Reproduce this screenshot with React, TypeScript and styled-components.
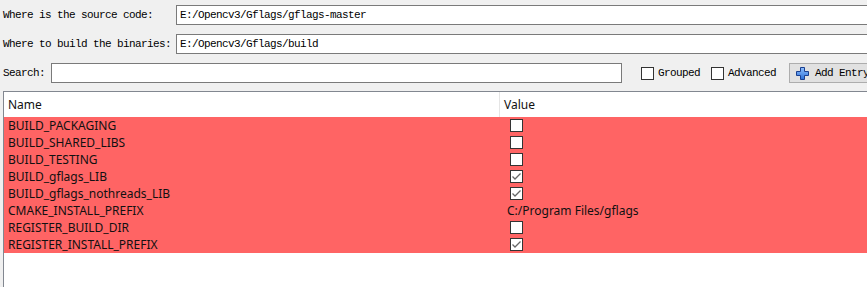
import styled, { createGlobalStyle } from "styled-components";

const GlobalStyle = createGlobalStyle`
    html, body {
        margin: 0;
        padding: 0;
        background: #f0f0f0;
        overflow: hidden;
    }
`;

const Window = styled.div`
    width: 920px;
    height: 287px;
    display: flex;
    flex-direction: column;
    background: #f0f0f0;
    font-family: "Liberation Mono", "DejaVu Sans Mono", monospace;
    font-size: 11px;
    letter-spacing: -0.6px;
    color: #000;
`;

const Form = styled.div`
    display: flex;
    flex-direction: column;
    gap: 9px;
    padding: 5px 0 0 3px;
`;

const PathRow = styled.div`
    display: grid;
    grid-template-columns: 173px 1fr;
    align-items: center;
    height: 20px;
`;

const Label = styled.span`
    white-space: nowrap;
    line-height: 20px;
`;

const TextBox = styled.div`
    height: 20px;
    box-sizing: border-box;
    border: 1px solid #7a7a7a;
    background: #fff;
    padding: 0 3px;
    line-height: 18px;
    white-space: nowrap;
`;

const SearchRow = styled.div`
    display: flex;
    align-items: center;
    height: 20px;
`;

const SearchBox = styled(TextBox)`
    width: 571px;
    margin-left: 6px;
`;

const Option = styled.label<{ $gap: number }>`
    display: flex;
    align-items: center;
    gap: 4px;
    margin-left: ${(p) => p.$gap}px;
`;

const Box = styled.span`
    display: inline-flex;
    align-items: center;
    justify-content: center;
    width: 13px;
    height: 13px;
    box-sizing: border-box;
    border: 1px solid #333;
    background: #fff;
`;

const AddButton = styled.button`
    display: flex;
    align-items: center;
    gap: 5px;
    margin-left: 13px;
    height: 20px;
    padding: 0 4px 0 5px;
    border: 1px solid #adadad;
    background: #e1e1e1;
    font: inherit;
    letter-spacing: inherit;
    color: #000;
    white-space: nowrap;
`;

const Table = styled.div`
    flex: 1;
    margin: 8px 0 0 3px;
    border-left: 1px solid #828790;
    border-top: 1px solid #828790;
    background: #fff;
    font-family: "Noto Sans", "Open Sans", sans-serif;
    font-size: 12px;
    letter-spacing: 0;
    color: #111;
`;

const Header = styled.div`
    display: grid;
    grid-template-columns: 495px 1fr;
    height: 25px;
    align-items: stretch;
`;

const HeaderCell = styled.div`
    display: flex;
    align-items: center;
    padding-left: 4px;
    & + & {
        border-left: 1px solid #e5e5e5;
    }
`;

const Row = styled.div`
    display: grid;
    grid-template-columns: 496px 1fr;
    height: 17px;
    background: #ff6464;
    align-items: center;
    line-height: 17px;
`;

const NameCell = styled.div`
    padding-left: 4px;
    white-space: nowrap;
`;

const ValueCell = styled.div<{ $text?: boolean }>`
    display: flex;
    align-items: center;
    padding-left: ${(p) => (p.$text ? 7 : 10)}px;
    white-space: nowrap;
`;

const Check = ({ on }: { on?: boolean }) => (
    <Box>
        {on && (
            <svg width="11" height="11" viewBox="0 0 11 11">
                <polyline points="1.5,5.5 4,8 9.5,2.5" fill="none" stroke="#666" strokeWidth="1.3" />
            </svg>
        )}
    </Box>
);

const PlusIcon = () => (
    <svg width="15" height="15" viewBox="0 0 15 15">
        <defs>
            <linearGradient id="plusFill" x1="0" y1="0" x2="0" y2="1">
                <stop offset="0" stopColor="#8fc0ff" />
                <stop offset="1" stopColor="#2a6fd6" />
            </linearGradient>
        </defs>
        <path
            d="M5.5 1.5h4v4h4v4h-4v4h-4v-4h-4v-4h4z"
            fill="url(#plusFill)"
            stroke="#1a3f8f"
            strokeWidth="1"
        />
    </svg>
);

type Entry = { name: string; value: boolean | string };

const entries: Entry[] = [
    { name: "BUILD_PACKAGING", value: false },
    { name: "BUILD_SHARED_LIBS", value: false },
    { name: "BUILD_TESTING", value: false },
    { name: "BUILD_gflags_LIB", value: true },
    { name: "BUILD_gflags_nothreads_LIB", value: true },
    { name: "CMAKE_INSTALL_PREFIX", value: "C:/Program Files/gflags" },
    { name: "REGISTER_BUILD_DIR", value: false },
    { name: "REGISTER_INSTALL_PREFIX", value: true },
];

export default function App() {
    return (
        <Window>
            <GlobalStyle />
            <Form>
                <PathRow>
                    <Label>Where is the source code:</Label>
                    <TextBox>E:/Opencv3/Gflags/gflags-master</TextBox>
                </PathRow>
                <PathRow>
                    <Label>Where to build the binaries:</Label>
                    <TextBox>E:/Opencv3/Gflags/build</TextBox>
                </PathRow>
                <SearchRow>
                    <Label>Search:</Label>
                    <SearchBox />
                    <Option $gap={19}>
                        <Check />
                        Grouped
                    </Option>
                    <Option $gap={11}>
                        <Check />
                        Advanced
                    </Option>
                    <AddButton>
                        <PlusIcon />
                        Add Entry
                    </AddButton>
                </SearchRow>
            </Form>
            <Table>
                <Header>
                    <HeaderCell>Name</HeaderCell>
                    <HeaderCell>Value</HeaderCell>
                </Header>
                {entries.map((e) => (
                    <Row key={e.name}>
                        <NameCell>{e.name}</NameCell>
                        {typeof e.value === "string" ? (
                            <ValueCell $text>{e.value}</ValueCell>
                        ) : (
                            <ValueCell>
                                <Check on={e.value} />
                            </ValueCell>
                        )}
                    </Row>
                ))}
            </Table>
        </Window>
    );
}
